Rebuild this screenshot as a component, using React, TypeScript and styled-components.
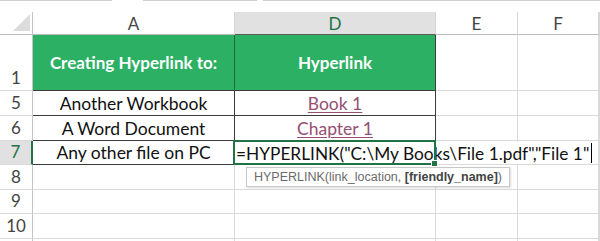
import React from "react";
import styled, { createGlobalStyle } from "styled-components";

const GlobalStyle = createGlobalStyle`
  html, body {
    margin: 0;
    padding: 0;
    background: #ffffff;
    overflow: hidden;
  }
  body {
    font-family: Lato, "Noto Sans", sans-serif;
  }
`;

const GRID = "#dadada";
const DARK = "#3c3c3c";
const EXCEL_GREEN = "#217346";

const Page = styled.div`
  width: 600px;
  height: 241px;
  overflow: hidden;
  background: #fff;
`;

const TopBar = styled.div`
  display: flex;
  height: 12px;
`;

const BarSegment = styled.div<{ $w: number; $gap?: number }>`
  width: ${({ $w }) => $w}px;
  margin-left: ${({ $gap }) => $gap ?? 0}px;
  height: 1px;
  background: #cfcfcf;
  flex: ${({ $w }) => ($w === 0 ? "1" : "none")};
`;

const Sheet = styled.div`
  display: grid;
  grid-template-columns: 33px 202px 201px 82px 81px 1fr;
  grid-template-rows: 23px 56px 25px 25px 24px 25px 24px 25px 25px;
`;

const Corner = styled.div`
  position: relative;
  border-right: 1px solid #c6c6c6;
  border-bottom: 1px solid #bdbdbd;
  box-sizing: border-box;

  &::after {
    content: "";
    position: absolute;
    right: 2px;
    bottom: 3px;
    width: 0;
    height: 0;
    border-left: 17px solid transparent;
    border-bottom: 17px solid #dcdcdc;
  }
`;

const ColHeader = styled.div<{ $selected?: boolean }>`
  box-sizing: border-box;
  display: flex;
  align-items: center;
  justify-content: center;
  background: ${({ $selected }) => ($selected ? "#e1e1e1" : "#ffffff")};
  color: ${({ $selected }) => ($selected ? EXCEL_GREEN : "#444444")};
  border-right: 1px solid #d6d6d6;
  border-bottom: 1px solid
    ${({ $selected }) => ($selected ? "#5a5a5a" : "#bdbdbd")};
  font-size: 17px;
  padding-top: 1px;
`;

const RowHeader = styled.div<{ $selected?: boolean }>`
  box-sizing: border-box;
  display: flex;
  align-items: flex-end;
  justify-content: center;
  padding-bottom: 1px;
  background: ${({ $selected }) => ($selected ? "#e1e1e1" : "#ffffff")};
  color: ${({ $selected }) => ($selected ? EXCEL_GREEN : "#444444")};
  border-right: ${({ $selected }) =>
    $selected ? `2px solid ${EXCEL_GREEN}` : "1px solid #c6c6c6"};
  border-bottom: 1px solid ${GRID};
  font-size: 17px;
  line-height: 22px;
`;

const Cell = styled.div<{
  $fill?: string;
  $right?: string;
  $bottom?: string;
  $bold?: boolean;
}>`
  position: relative;
  box-sizing: border-box;
  display: flex;
  align-items: center;
  justify-content: center;
  background: ${({ $fill }) => $fill ?? "#ffffff"};
  border-right: 1px solid ${({ $right }) => $right ?? GRID};
  border-bottom: 1px solid ${({ $bottom }) => $bottom ?? GRID};
  color: ${({ $fill }) => ($fill ? "#ffffff" : "#111111")};
  font-weight: ${({ $bold }) => ($bold ? 700 : 400)};
  font-size: ${({ $bold }) => ($bold ? "17px" : "17.5px")};
  white-space: nowrap;
`;

const LinkText = styled.span`
  color: #954f72;
  text-decoration: underline;
  text-underline-offset: 2px;
  text-decoration-thickness: 1px;
`;

const ActiveFrame = styled.div`
  position: absolute;
  left: -2px;
  top: -1px;
  right: -1px;
  bottom: -1px;
  border: 2px solid ${EXCEL_GREEN};
  pointer-events: none;
  z-index: 2;
`;

const FillHandle = styled.div`
  position: absolute;
  right: -4px;
  bottom: -4px;
  width: 5px;
  height: 5px;
  background: ${EXCEL_GREEN};
  border: 1px solid #ffffff;
  z-index: 3;
`;

const Editor = styled.div`
  position: absolute;
  left: 1px;
  top: 1px;
  height: 22px;
  display: flex;
  align-items: center;
  padding-right: 6px;
  background: #ffffff;
  color: #111111;
  font-size: 17.3px;
  white-space: nowrap;
  z-index: 1;
`;

const Caret = styled.span`
  display: inline-block;
  width: 1px;
  height: 20px;
  margin-left: 2px;
  background: #000000;
`;

const Tip = styled.div`
  position: absolute;
  left: 11px;
  top: 26px;
  height: 20px;
  box-sizing: border-box;
  display: flex;
  align-items: center;
  padding: 0 7px 0 7px;
  background: #ffffff;
  border: 1px solid #c8c8c8;
  box-shadow: 1px 1px 2px rgba(0, 0, 0, 0.15);
  font-family: "Liberation Sans", Arial, sans-serif;
  font-size: 12.5px;
  color: #6a6a6a;
  white-space: nowrap;
  z-index: 4;

  b {
    color: #444444;
  }
`;

type Row = {
  num: string;
  a?: React.ReactNode;
  d?: React.ReactNode;
};

const rows: Row[] = [
  { num: "5", a: "Another Workbook", d: <LinkText>Book 1</LinkText> },
  { num: "6", a: "A Word Document", d: <LinkText>Chapter 1</LinkText> },
];

const emptyRows = ["8", "9", "10", ""];

export default function App() {
  return (
    <Page>
      <GlobalStyle />
      <TopBar>
        <BarSegment $w={112} />
        <BarSegment $w={114} $gap={31} />
        <BarSegment $w={0} $gap={6} />
      </TopBar>
      <Sheet>
        <Corner />
        <ColHeader>A</ColHeader>
        <ColHeader $selected>D</ColHeader>
        <ColHeader>E</ColHeader>
        <ColHeader>F</ColHeader>
        <ColHeader />

        <RowHeader>1</RowHeader>
        <Cell $fill="#2bb064" $bold $right="#1d6a3e" $bottom={DARK}>
          Creating Hyperlink to:
        </Cell>
        <Cell $fill="#2bb064" $bold $right={DARK} $bottom={DARK}>
          Hyperlink
        </Cell>
        <Cell />
        <Cell />
        <Cell />

        {rows.map((r) => (
          <React.Fragment key={r.num}>
            <RowHeader>{r.num}</RowHeader>
            <Cell $right={DARK} $bottom={DARK}>
              {r.a}
            </Cell>
            <Cell $right={DARK} $bottom={DARK}>
              {r.d}
            </Cell>
            <Cell />
            <Cell />
            <Cell />
          </React.Fragment>
        ))}

        <RowHeader $selected>7</RowHeader>
        <Cell $right={DARK} $bottom={DARK}>
          Any other file on PC
        </Cell>
        <Cell $bottom={GRID}>
          <Editor>
            =HYPERLINK("C:\My Books\File 1.pdf","File 1"
            <Caret />
          </Editor>
          <ActiveFrame>
            <FillHandle />
          </ActiveFrame>
          <Tip>
            HYPERLINK(link_location,&nbsp;<b>[friendly_name]</b>)
          </Tip>
        </Cell>
        <Cell />
        <Cell />
        <Cell />

        {emptyRows.map((n, i) => (
          <React.Fragment key={i}>
            <RowHeader>{n}</RowHeader>
            <Cell />
            <Cell />
            <Cell />
            <Cell />
            <Cell />
          </React.Fragment>
        ))}
      </Sheet>
    </Page>
  );
}
